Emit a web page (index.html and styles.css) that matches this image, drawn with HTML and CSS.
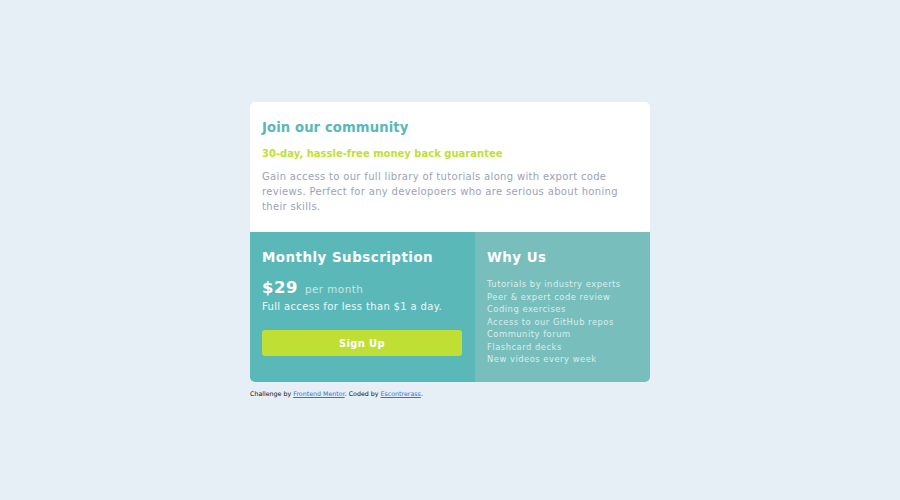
FILE: index.html
```html
<!DOCTYPE html>
<html lang="en">
<head>
<meta charset="utf-8">
<title>Single price grid</title>
<link rel="stylesheet" href="styles.css">
</head>
<body>
<main class="page">
  <section class="card">
    <div class="top">
      <h1 class="title">Join our community</h1>
      <p class="guarantee">30-day, hassle-free money back guarantee</p>
      <p class="desc">Gain access to our full library of tutorials along with export code reviews. Perfect for any developoers who are serious about honing their skills.</p>
    </div>
    <div class="bottom">
      <div class="sub">
        <h2 class="sub-title">Monthly Subscription</h2>
        <p class="price"><span class="amount">$29</span><span class="per">per month</span></p>
        <p class="access">Full access for less than $1 a day.</p>
        <button class="btn">Sign Up</button>
      </div>
      <div class="why">
        <h2 class="why-title">Why Us</h2>
        <ul class="list">
          <li>Tutorials by industry experts</li>
          <li>Peer &amp; expert code review</li>
          <li>Coding exercises</li>
          <li>Access to our GitHub repos</li>
          <li>Community forum</li>
          <li>Flashcard decks</li>
          <li>New videos every week</li>
        </ul>
      </div>
    </div>
  </section>
  <p class="attribution">Challenge by <a href="#">Frontend Mentor</a>. Coded by <a href="#">Escontrerass</a>.</p>
</main>
</body>
</html>
```
FILE: styles.css
```css
* { box-sizing: border-box; }
html, body { margin: 0; height: 100%; }
body {
  background: #e6eef6;
  font-family: "DejaVu Sans", sans-serif;
}
.page {
  min-height: 100%;
  display: flex;
  flex-direction: column;
  align-items: center;
  justify-content: center;
}
.card {
  width: 400px;
  border-radius: 5px;
  overflow: hidden;
  background: #fff;
}
.top {
  height: 130px;
  padding: 17px 12px 0;
}
.title {
  margin: 0;
  font-size: 13.2px;
  font-weight: bold;
  color: #59b8b8;
  line-height: 18px;
  letter-spacing: 0.1px;
}
.guarantee {
  margin: 10px 0 0;
  font-size: 10px;
  font-weight: bold;
  color: #c0df34;
  line-height: 14px;
}
.desc {
  margin: 8px 0 0;
  font-size: 10px;
  line-height: 15px;
  letter-spacing: 0.33px;
  color: #9aa3b8;
}
.bottom {
  display: flex;
  height: 150px;
}
.sub {
  width: 225px;
  background: #5ab9b8;
  padding: 18px 12px 0;
  color: #fff;
}
.sub-title, .why-title {
  margin: 0;
  font-size: 13.4px;
  font-weight: bold;
  letter-spacing: 0.5px;
  line-height: 16px;
}
.price {
  margin: 12px 0 0;
  display: flex;
  align-items: baseline;
  line-height: 20px;
}
.amount {
  font-size: 16.5px;
  font-weight: bold;
  letter-spacing: 0.5px;
}
.per {
  margin-left: 7px;
  font-size: 10.3px;
  letter-spacing: 0.5px;
  color: #c7e6e6;
}
.access {
  margin: 1px 0 0;
  font-size: 10px;
  letter-spacing: 0.35px;
  line-height: 14px;
  color: #eef8f8;
}
.btn {
  display: block;
  margin-top: 16px;
  width: 200px;
  height: 26px;
  border: 0;
  border-radius: 3px;
  background: #c0df34;
  color: #fff;
  font-family: inherit;
  font-size: 10px;
  font-weight: bold;
  letter-spacing: 0.3px;
}
.why {
  flex: 1;
  background: #78bebd;
  padding: 18px 12px 0;
  color: #fff;
}
.list {
  list-style: none;
  margin: 12px 0 0;
  padding: 0;
  font-size: 8.4px;
  line-height: 12.5px;
  letter-spacing: 0.5px;
  color: #d9eeee;
}
.attribution {
  width: 400px;
  margin: 8px 0 0;
  font-size: 6.3px;
  line-height: 8px;
  color: #111;
}
.attribution a { color: #3b6fd0; }
```
